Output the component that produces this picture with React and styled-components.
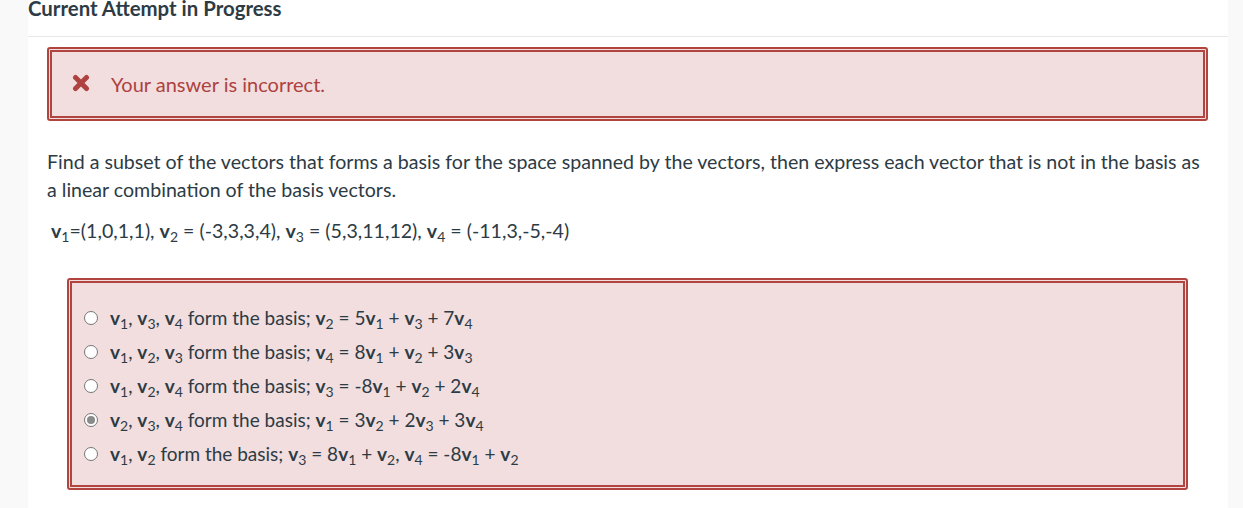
import styled, { createGlobalStyle } from "styled-components";

const GlobalStyle = createGlobalStyle`
  body {
    margin: 0;
    background: #f9f9f9;
    font-family: "Lato", "Helvetica Neue", Arial, sans-serif;
    color: #2d3b45;
  }
`;

const Page = styled.div`
  height: 508px;
  overflow: hidden;
`;

const Panel = styled.div`
  margin-left: 28px;
  width: 1200px;
  min-height: 508px;
  background: #ffffff;
`;

const Header = styled.div`
  height: 36px;
  border-bottom: 1px solid #e8e8e8;
  display: flex;
  align-items: flex-start;
`;

const Title = styled.h2`
  margin: -7px 0 0 0;
  font-size: 20.4px;
  line-height: 30px;
  font-weight: 700;
  color: #2d3b45;
  white-space: nowrap;
`;

const Body = styled.div`
  padding: 10px 20px 0 19px;
`;

const AlertBox = styled.div`
  height: 74px;
  box-sizing: border-box;
  border: 5px double #b24440;
  border-radius: 3px;
  background: #f2dede;
  display: flex;
  align-items: center;
  padding-left: 20px;
  color: #ad4240;
  font-size: 20px;
`;

const XIcon = styled.svg`
  width: 18px;
  height: 18px;
  margin-right: 21px;
  margin-top: -2px;
`;

const Question = styled.p`
  margin: 27px 0 0 0;
  font-size: 19.6px;
  line-height: 28px;
  color: #2d3b45;
`;

const Vectors = styled.p`
  margin: 13px 0 0 4px;
  font-size: 19.6px;
  line-height: 28px;
`;

const V = styled.b`
  font-weight: 700;
`;

const Sub = styled.sub`
  font-size: 14px;
  font-weight: 400;
  vertical-align: -4px;
  line-height: 0;
`;

const AnswerBox = styled.div`
  margin: 33px 0 0 20px;
  width: 1121px;
  height: 212px;
  box-sizing: border-box;
  border: 5px double #b24440;
  border-radius: 3px;
  background: #f2dede;
  padding: 17px 0 0 12px;
  display: flex;
  flex-direction: column;
`;

const Option = styled.label`
  display: flex;
  align-items: center;
  height: 34px;
  font-size: 19px;
  color: #2d3b45;
`;

const Radio = styled.span`
  width: 12px;
  height: 12px;
  border-radius: 50%;
  border: 1px solid #767676;
  background: #ffffff;
  margin-right: 12px;
  margin-top: 1px;
  display: flex;
  align-items: center;
  justify-content: center;
  flex-shrink: 0;
  &::after {
    content: "";
    width: 8px;
    height: 8px;
    border-radius: 50%;
    background: ${(p) => (p.$checked ? "#8a8a8a" : "transparent")};
  }
`;

function Vec({ n }) {
  return (
    <>
      <V>v</V>
      <Sub>{n}</Sub>
    </>
  );
}

const options = [
  [
    <><Vec n={1} />, <Vec n={3} />, <Vec n={4} /> form the basis; <Vec n={2} /> = 5<Vec n={1} /> + <Vec n={3} /> + 7<Vec n={4} /></>,
    false,
  ],
  [
    <><Vec n={1} />, <Vec n={2} />, <Vec n={3} /> form the basis; <Vec n={4} /> = 8<Vec n={1} /> + <Vec n={2} /> + 3<Vec n={3} /></>,
    false,
  ],
  [
    <><Vec n={1} />, <Vec n={2} />, <Vec n={4} /> form the basis; <Vec n={3} /> = -8<Vec n={1} /> + <Vec n={2} /> + 2<Vec n={4} /></>,
    false,
  ],
  [
    <><Vec n={2} />, <Vec n={3} />, <Vec n={4} /> form the basis; <Vec n={1} /> = 3<Vec n={2} /> + 2<Vec n={3} /> + 3<Vec n={4} /></>,
    true,
  ],
  [
    <><Vec n={1} />, <Vec n={2} /> form the basis; <Vec n={3} /> = 8<Vec n={1} /> + <Vec n={2} />, <Vec n={4} /> = -8<Vec n={1} /> + <Vec n={2} /></>,
    false,
  ],
];

export default function App() {
  return (
    <Page>
      <GlobalStyle />
      <Panel>
        <Header>
          <Title>Current Attempt in Progress</Title>
        </Header>
        <Body>
          <AlertBox>
            <XIcon viewBox="0 0 18 18">
              <path
                d="M3.5 3.5 L14.5 14.5 M14.5 3.5 L3.5 14.5"
                stroke="#ad4240"
                strokeWidth="5"
                strokeLinecap="round"
              />
            </XIcon>
            Your answer is incorrect.
          </AlertBox>
          <Question>
            Find a subset of the vectors that forms a basis for the space spanned by the vectors, then express each vector that is not in the basis as a linear combination of the basis vectors.
          </Question>
          <Vectors>
            <Vec n={1} />=(1,0,1,1), <Vec n={2} /> = (-3,3,3,4), <Vec n={3} /> = (5,3,11,12), <Vec n={4} /> = (-11,3,-5,-4)
          </Vectors>
          <AnswerBox>
            {options.map(([text, checked], i) => (
              <Option key={i}>
                <Radio $checked={checked} />
                <span>{text}</span>
              </Option>
            ))}
          </AnswerBox>
        </Body>
      </Panel>
    </Page>
  );
}
